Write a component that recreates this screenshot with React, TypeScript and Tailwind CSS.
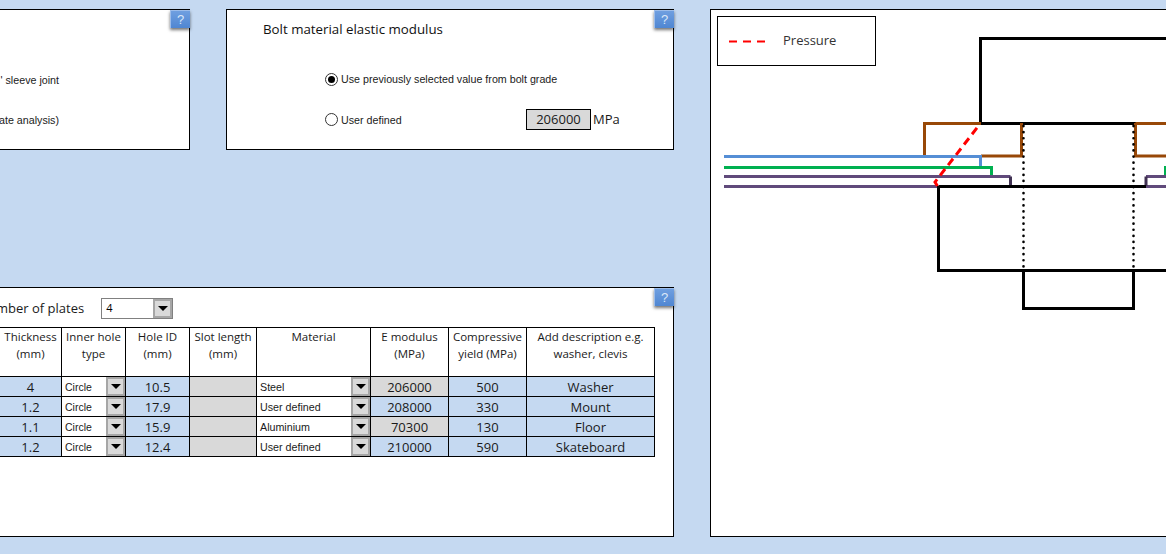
import React from 'react';

const calibri = { fontFamily: '"Open Sans", sans-serif' };

const plates = [
  { t: '4', id: '10.5', material: 'Steel', e: '206000', eGrey: true, y: '500', desc: 'Washer' },
  { t: '1.2', id: '17.9', material: 'User defined', e: '208000', eGrey: false, y: '330', desc: 'Mount' },
  { t: '1.1', id: '15.9', material: 'Aluminium', e: '70300', eGrey: true, y: '130', desc: 'Floor' },
  { t: '1.2', id: '12.4', material: 'User defined', e: '210000', eGrey: false, y: '590', desc: 'Skateboard' },
];

const HelpButton = () => (
  <div className="absolute top-0 -right-px flex h-[18px] w-[20px] items-center justify-center border-t border-l border-[#9dbdea] bg-gradient-to-b from-[#6f9fe0] to-[#4f86d2] text-[13px] leading-none text-[#dbe7f8] shadow-[0px_2px_3px_rgba(0,0,0,0.55)] font-['Liberation_Sans',sans-serif]">
    ?
  </div>
);

const DropArrow = ({ className }: { className: string }) => (
  <div className={`flex shrink-0 items-center justify-center bg-[#d9d9d9] border-2 border-[#a6a6a6] ${className}`}>
    <div className="h-0 w-0 border-x-[5px] border-t-[5px] border-x-transparent border-t-black" />
  </div>
);

const Radio = ({ checked }: { checked?: boolean }) => (
  <div className="flex h-[13px] w-[13px] shrink-0 items-center justify-center rounded-full border border-[#333] bg-white">
    {checked && <div className="h-[7px] w-[7px] rounded-full bg-black" />}
  </div>
);

const HeadCell = ({ w, children }: { w: string; children: React.ReactNode }) => (
  <div className={`${w} shrink-0 border-r border-black text-center text-[11.5px] leading-[17px] text-[#1a1a1a]`}>
    {children}
  </div>
);

const Cell = ({ w, grey, children }: { w: string; grey?: boolean; children?: React.ReactNode }) => (
  <div className={`${w} ${grey ? 'bg-[#d9d9d9]' : 'bg-[#c5d9f1]'} flex shrink-0 items-center justify-center border-r border-black pt-[2px] text-[13px] text-[#1a1a1a]`}>
    {children}
  </div>
);

const Drawing = () => (
  <svg className="absolute inset-0" width="456" height="527" viewBox="711 10 456 527" fill="none" strokeWidth="3">
    <path d="M980.5 123.5V38.5H1167M980.5 123.5H1167" stroke="#000" />
    <path d="M924.5 156V123.5H981M1021.5 123V156H981M1135.5 123V156H1167M1135.5 123.5H1167" stroke="#984807" />
    <path d="M724 156.5H980.5V168" stroke="#558ed5" />
    <path d="M724 167.5H991.5V177M1165.5 177V167.5H1167" stroke="#00b050" />
    <path d="M724 176.5H1010.5M724 186.5H938M1167 176.5H1146M1167 186.5H1146" stroke="#604a7b" />
    <path d="M1010.5 176.5V186M1146 176.5V186" stroke="#403152" />
    <path d="M938.5 186.5H1146M938.5 186V270.5H1167M1023.5 270V308.5H1133.5V270" stroke="#000" />
    <path d="M1023.5 126V270M1133.5 126V270" stroke="#000" strokeWidth="2.6" strokeLinecap="round" strokeDasharray="0.1 6" />
    <path d="M980 124L935 182L938 187" stroke="#ff0000" strokeDasharray="8 5" strokeDashoffset="8" />
  </svg>
);

export default function App() {
  return (
    <div className="flex h-[554px] w-[1166px] gap-[36px] overflow-hidden bg-[#c5d9f1] pt-[9px]" style={calibri}>
      <div className="flex w-[674px] shrink-0 flex-col">
        <div className="flex h-[141px] shrink-0 gap-[36px]">
          <div className="relative -ml-[10px] w-[200px] shrink-0 border border-black bg-white font-['Liberation_Sans',sans-serif] text-[10.7px] text-[#1a1a1a]">
            <HelpButton />
            <div className="mt-[62px] whitespace-nowrap pr-[130px] text-right">' sleeve joint</div>
            <div className="mt-[24px] whitespace-nowrap pr-[130px] text-right">ate analysis)</div>
          </div>
          <div className="relative w-[448px] shrink-0 border border-black bg-white">
            <HelpButton />
            <div className="ml-[36px] mt-[9px] text-[13.3px] leading-[20px] text-[#111]">Bolt material elastic modulus</div>
            <div className="ml-[98px] mt-[32px] flex items-center gap-[3px] font-['Liberation_Sans',sans-serif] text-[10.7px] text-[#1a1a1a]">
              <Radio checked />
              <span>Use previously selected value from bolt grade</span>
            </div>
            <div className="ml-[98px] mt-[22px] flex items-center font-['Liberation_Sans',sans-serif] text-[10.7px] text-[#1a1a1a]">
              <Radio />
              <span className="ml-[3px] w-[185px]">User defined</span>
              <div className="flex h-[21px] w-[65px] items-center justify-center border border-black bg-[#d9d9d9] text-[13px]" style={calibri}>206000</div>
              <span className="ml-[2px] text-[13px]" style={calibri}>MPa</span>
            </div>
          </div>
        </div>

        <div className="relative mt-[137px] h-[250px] shrink-0 border-y border-r border-black bg-white">
          <HelpButton />
          <div className="mt-[10px] flex h-[21px] items-center">
            <span className="-ml-[4px] whitespace-nowrap text-[13px] text-[#1a1a1a]">mber of plates</span>
            <div className="ml-[17px] flex h-[21px] w-[72px] items-center border border-[#808080] pl-[4px] text-[11px]">
              <span className="flex-1">4</span>
              <DropArrow className="h-full w-[19px]" />
            </div>
          </div>

          <div className="mt-[8px] w-[655px] border-y border-black">
            <div className="flex h-[49px] border-b border-black">
              <HeadCell w="w-[62px]">Thickness<br />(mm)</HeadCell>
              <HeadCell w="w-[64px]">Inner hole<br />type</HeadCell>
              <HeadCell w="w-[64px]">Hole ID<br />(mm)</HeadCell>
              <HeadCell w="w-[67px]">Slot length<br />(mm)</HeadCell>
              <HeadCell w="w-[114px]">Material</HeadCell>
              <HeadCell w="w-[78px]">E modulus<br />(MPa)</HeadCell>
              <HeadCell w="w-[78px]">Compressive<br />yield (MPa)</HeadCell>
              <HeadCell w="w-[128px]">Add description e.g.<br />washer, clevis</HeadCell>
            </div>
            {plates.map((p, i) => (
              <div key={i} className={`flex ${i < 3 ? 'h-[20px] border-b border-black' : 'h-[19px]'}`}>
                <Cell w="w-[62px]">{p.t}</Cell>
                <div className="flex w-[64px] shrink-0 items-center justify-between border-r border-black bg-white pl-[3px] font-['Liberation_Sans',sans-serif] text-[10.5px] text-[#1a1a1a]">
                  <span className="pt-[2px]">Circle</span>
                  <DropArrow className="h-full w-[19px]" />
                </div>
                <Cell w="w-[64px]">{p.id}</Cell>
                <Cell w="w-[67px]" grey />
                <div className="flex w-[114px] shrink-0 items-center justify-between border-r border-black bg-white pl-[3px] font-['Liberation_Sans',sans-serif] text-[10.7px] text-[#1a1a1a]">
                  <span className="pt-px">{p.material}</span>
                  <DropArrow className="h-full w-[19px]" />
                </div>
                <Cell w="w-[78px]" grey={p.eGrey}>{p.e}</Cell>
                <Cell w="w-[78px]">{p.y}</Cell>
                <Cell w="w-[128px]">{p.desc}</Cell>
              </div>
            ))}
          </div>
        </div>
      </div>

      <div className="relative h-[528px] w-[470px] shrink-0 border border-black bg-white">
        <Drawing />
        <div className="relative ml-[6px] mt-[6px] flex h-[50px] w-[159px] items-center border border-black bg-white">
          <svg className="ml-[11px] shrink-0" width="36" height="3" viewBox="0 0 36 3" fill="none">
            <path d="M0 1.5H36" stroke="#ff0000" strokeWidth="2" strokeDasharray="8 6" />
          </svg>
          <span className="ml-[18px] text-[13px] text-[#333]">Pressure</span>
        </div>
      </div>
    </div>
  );
}
